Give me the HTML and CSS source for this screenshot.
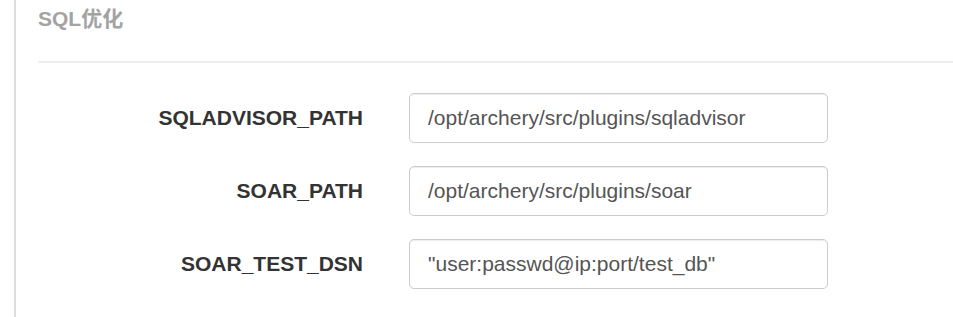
FILE: index.html
```html
<!DOCTYPE html>
<html lang="zh-CN">
<head>
    <meta charset="UTF-8">
    <title>系统配置 - SQL优化</title>
    <link rel="stylesheet" href="styles.css">
</head>
<body>
    <div class="panel">
        <h4 class="section-title">SQL优化</h4>
        <hr class="divider">

        <form class="form-horizontal">
            <div class="form-row">
                <label class="form-label" for="sqladvisor">SQLADVISOR_PATH</label>
                <input class="form-input" id="sqladvisor" type="text" value="/opt/archery/src/plugins/sqladvisor">
            </div>
            <div class="form-row">
                <label class="form-label" for="soar">SOAR_PATH</label>
                <input class="form-input" id="soar" type="text" value="/opt/archery/src/plugins/soar">
            </div>
            <div class="form-row">
                <label class="form-label" for="soar_dsn">SOAR_TEST_DSN</label>
                <input class="form-input" id="soar_dsn" type="text" value="&quot;user:passwd@ip:port/test_db&quot;">
            </div>
        </form>
    </div>
</body>
</html>
```

FILE: styles.css
```css
* {
    margin: 0;
    padding: 0;
    box-sizing: border-box;
}

body {
    font-family: 'Liberation Sans', Arial, 'Noto Sans CJK SC', sans-serif;
    background: #fff;
    color: #333;
}

.panel {
    margin-left: 14px;
    border-left: 2px solid #ddd;
    padding-left: 22px;
    min-height: 317px;
}

.section-title {
    font-size: 21px;
    font-weight: bold;
    color: #a3a3a3;
    padding-top: 6px;
    line-height: 26px;
}

.divider {
    border: none;
    border-top: 2px solid #eee;
    margin-top: 29px;
}

.form-horizontal {
    display: flex;
    flex-direction: column;
    gap: 23px;
    padding-top: 30px;
}

.form-row {
    display: flex;
    align-items: center;
}

.form-label {
    width: 325px;
    text-align: right;
    font-size: 21px;
    font-weight: bold;
    color: #333;
    margin-right: 46px;
}

.form-input {
    width: 419px;
    height: 50px;
    padding: 0 18px;
    font-family: inherit;
    font-size: 21px;
    color: #555;
    border: 1px solid #ccc;
    border-radius: 5px;
    box-shadow: inset 0 1px 1px rgba(0,0,0,0.075);
    outline: none;
}
```
